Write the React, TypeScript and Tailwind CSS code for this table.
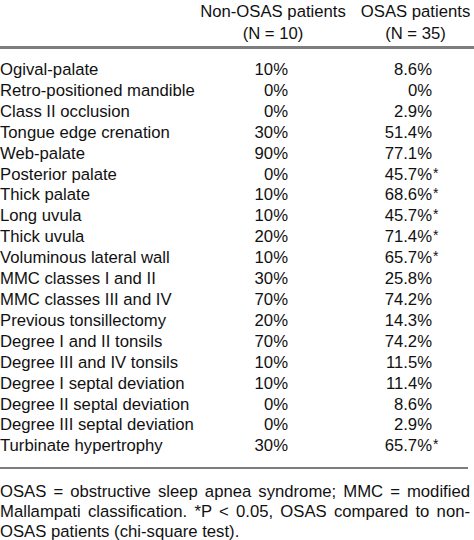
const rows: [string, string, string, boolean][] = [
  ['Ogival-palate', '10%', '8.6%', false],
  ['Retro-positioned mandible', '0%', '0%', false],
  ['Class II occlusion', '0%', '2.9%', false],
  ['Tongue edge crenation', '30%', '51.4%', false],
  ['Web-palate', '90%', '77.1%', false],
  ['Posterior palate', '0%', '45.7%', true],
  ['Thick palate', '10%', '68.6%', true],
  ['Long uvula', '10%', '45.7%', true],
  ['Thick uvula', '20%', '71.4%', true],
  ['Voluminous lateral wall', '10%', '65.7%', true],
  ['MMC classes I and II', '30%', '25.8%', false],
  ['MMC classes III and IV', '70%', '74.2%', false],
  ['Previous tonsillectomy', '20%', '14.3%', false],
  ['Degree I and II tonsils', '70%', '74.2%', false],
  ['Degree III and IV tonsils', '10%', '11.5%', false],
  ['Degree I septal deviation', '10%', '11.4%', false],
  ['Degree II septal deviation', '0%', '8.6%', false],
  ['Degree III septal deviation', '0%', '2.9%', false],
  ['Turbinate hypertrophy', '30%', '65.7%', true],
];

export default function App() {
  return (
    <div className="w-[474px] h-[540px] overflow-hidden bg-white font-['Liberation_Sans',Arial,sans-serif] text-[16.7px] text-[#111]">
      {/* column headings */}
      <div className="flex pl-[199px] pt-[1px] leading-[22px]">
        <div className="w-[148px] text-center">
          <div>Non-OSAS patients</div>
          <div>(N = 10)</div>
        </div>
        <div className="ml-[10px] w-[117px] text-center">
          <div>OSAS patients</div>
          <div>(N = 35)</div>
        </div>
      </div>
      <div className="mt-[1px] h-[3px] w-full bg-[#7d7d7d]" />

      <div className="pt-[11px]">
        {rows.map(([label, a, b, sig]) => (
          <div key={label} className="grid grid-cols-[208px_80px_144px] leading-[20.9px]">
            <div className="whitespace-nowrap">{label}</div>
            <div className="text-right">{a}</div>
            <div className="flex justify-end">
              <span>{b}</span>
              <span className="relative w-0 overflow-visible">
                {sig && <span className="absolute left-[1px] -top-[2px] text-[14px]">*</span>}
              </span>
            </div>
          </div>
        ))}
      </div>

      <div className="mt-[10px] h-[2px] w-[468px] bg-[#7d7d7d]" />

      <p className="mt-[13px] w-[470px] text-justify leading-[20px]">
        OSAS = obstructive sleep apnea syndrome; MMC = modified Mallampati classification. *P &lt; 0.05, OSAS
        compared to non-OSAS patients (chi-square test).
      </p>
    </div>
  );
}
